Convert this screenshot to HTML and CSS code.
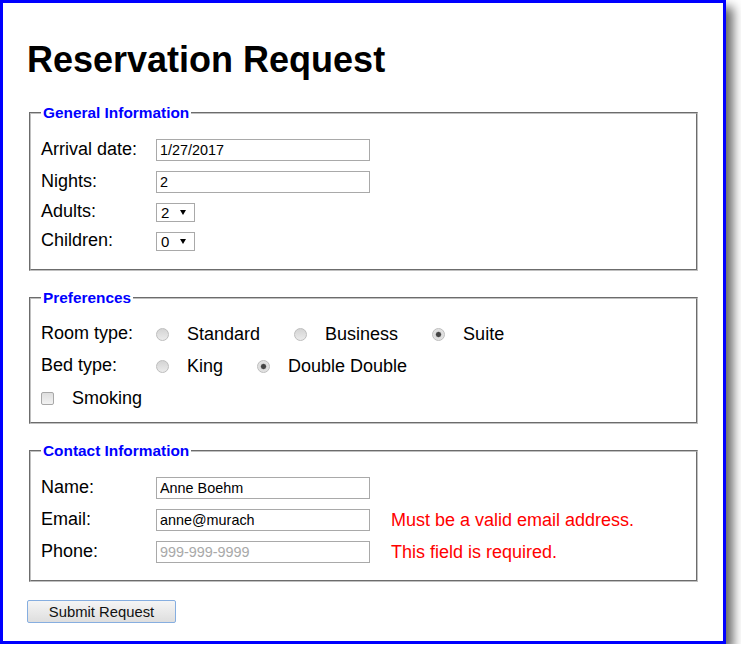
FILE: index.html
```html
<!DOCTYPE html>
<html lang="en">
<head>
    <meta charset="UTF-8">
    <title>Reservation Request</title>
    <link rel="stylesheet" href="styles.css">
</head>
<body>
    <main class="page">
        <h1 class="title">Reservation Request</h1>
        <form class="form" action="#" onsubmit="return false;">

            <fieldset class="group group-general">
                <legend class="group-title">General Information</legend>
                <div class="row">
                    <label class="field-label" for="arrival">Arrival date:</label>
                    <input class="text-input" type="text" id="arrival" value="1/27/2017">
                </div>
                <div class="row">
                    <label class="field-label" for="nights">Nights:</label>
                    <input class="text-input" type="text" id="nights" value="2">
                </div>
                <div class="row row-select">
                    <label class="field-label" for="adults">Adults:</label>
                    <span class="select-wrap">
                        <select class="select" id="adults">
                            <option>1</option>
                            <option selected>2</option>
                            <option>3</option>
                            <option>4</option>
                        </select>
                    </span>
                </div>
                <div class="row row-select">
                    <label class="field-label" for="children">Children:</label>
                    <span class="select-wrap">
                        <select class="select" id="children">
                            <option selected>0</option>
                            <option>1</option>
                            <option>2</option>
                            <option>3</option>
                        </select>
                    </span>
                </div>
            </fieldset>

            <!-- 房型偏好 -->
            <fieldset class="group group-prefs">
                <legend class="group-title">Preferences</legend>
                <div class="row">
                    <span class="field-label">Room type:</span>
                    <input class="radio" type="radio" name="room" id="standard">
                    <label class="choice" for="standard">Standard</label>
                    <input class="radio" type="radio" name="room" id="business">
                    <label class="choice" for="business">Business</label>
                    <input class="radio" type="radio" name="room" id="suite" checked>
                    <label class="choice" for="suite">Suite</label>
                </div>
                <div class="row">
                    <span class="field-label">Bed type:</span>
                    <input class="radio" type="radio" name="bed" id="king">
                    <label class="choice" for="king">King</label>
                    <input class="radio" type="radio" name="bed" id="double" checked>
                    <label class="choice" for="double">Double Double</label>
                </div>
                <div class="row row-check">
                    <input class="checkbox" type="checkbox" id="smoking">
                    <label class="choice" for="smoking">Smoking</label>
                </div>
            </fieldset>

            <fieldset class="group">
                <legend class="group-title">Contact Information</legend>
                <div class="row">
                    <label class="field-label" for="name">Name:</label>
                    <input class="text-input" type="text" id="name" value="Anne Boehm">
                </div>
                <div class="row">
                    <label class="field-label" for="email">Email:</label>
                    <input class="text-input" type="text" id="email" value="anne@murach">
                    <span class="error">Must be a valid email address.</span>
                </div>
                <div class="row">
                    <label class="field-label" for="phone">Phone:</label>
                    <input class="text-input" type="text" id="phone" placeholder="999-999-9999">
                    <span class="error">This field is required.</span>
                </div>
            </fieldset>

            <button class="submit" type="submit">Submit Request</button>
        </form>
    </main>
</body>
</html>
```

FILE: styles.css
```css
html, body {
    margin: 0;
    padding: 0;
    background: #fff;
    font-family: "Liberation Sans", Arial, sans-serif;
    color: #000;
}

.page {
    width: 673px;
    padding: 12px 23px 18px 24px;
    border: 3px solid #0000ff;
    background: #fff;
    box-shadow: 7px 7px 10px rgba(0, 0, 0, 0.6);
}

.title {
    margin: 24px 0;
    font-size: 36px;
    font-weight: bold;
    line-height: 41px;
}

.form {
    margin: 0;
}

/* fieldset 區塊 */
.group {
    margin: 0 2px 18px;
    padding: 17px 10px 17px;
    border: 2px groove #c0c0c0;
}

.group-general {
    padding-bottom: 18px;
}

.group-prefs {
    padding-top: 16px;
    padding-bottom: 13px;
}

.group-title {
    padding: 0 2px;
    color: #0000ff;
    font-size: 15.4px;
    font-weight: bold;
    line-height: 18px;
}

.row {
    display: flex;
    align-items: center;
    height: 22px;
    margin-bottom: 10px;
}

.row:last-child {
    margin-bottom: 0;
}

.row-select {
    height: 19px;
}

.row-check {
    margin-top: 1px;
}

.field-label {
    width: 115px;
    flex: none;
    margin-bottom: 3px;
    font-size: 18px;
    line-height: 20px;
}

.text-input {
    box-sizing: border-box;
    width: 214px;
    height: 22px;
    margin: 0;
    padding: 0 3px;
    border: 1px solid #a9a9a9;
    font-family: "Liberation Sans", Arial, sans-serif;
    font-size: 14.4px;
    color: #000;
    outline: none;
}

.text-input::placeholder {
    color: #a9a9a9;
}

.select-wrap {
    position: relative;
    display: inline-block;
}

.select-wrap::after {
    content: "";
    position: absolute;
    top: 7px;
    right: 9px;
    border-left: 3.5px solid transparent;
    border-right: 3.5px solid transparent;
    border-top: 5px solid #000;
    pointer-events: none;
}

.select {
    appearance: none;
    -webkit-appearance: none;
    box-sizing: border-box;
    display: block;
    width: 39px;
    height: 19px;
    margin: 0;
    padding: 0 0 0 4px;
    border: 1px solid #a9a9a9;
    border-radius: 0;
    background: #fff;
    font-family: "Liberation Sans", Arial, sans-serif;
    font-size: 15px;
    line-height: 17px;
    color: #000;
}

.radio, .checkbox {
    appearance: none;
    -webkit-appearance: none;
    flex: none;
    width: 13px;
    height: 13px;
    margin: 0 18px 0 0;
    border: 1px solid #bdbdbd;
    background: linear-gradient(#d4d4d4, #ebebeb);
}

.radio {
    border-radius: 50%;
}

.radio:checked {
    background: radial-gradient(circle, #444 0, #444 2px, #888 2.6px, #dcdcdc 3.2px, #ebebeb 100%);
}

.checkbox {
    border-radius: 2px;
    border-color: #a8a8a8;
    background: linear-gradient(#dedede, #f2f2f2);
}

.choice {
    margin-right: 34px;
    font-size: 18px;
    line-height: 20px;
}

.error {
    margin-left: 21px;
    color: #ff0000;
    font-size: 18px;
}

.submit {
    display: block;
    width: 149px;
    height: 23px;
    margin: 2px 0 0;
    padding: 0;
    border: 1px solid #86aee0;
    border-radius: 2px;
    background: linear-gradient(#f5f5f5, #dedede);
    font-family: "Liberation Sans", Arial, sans-serif;
    font-size: 14.8px;
    color: #111;
}
```
